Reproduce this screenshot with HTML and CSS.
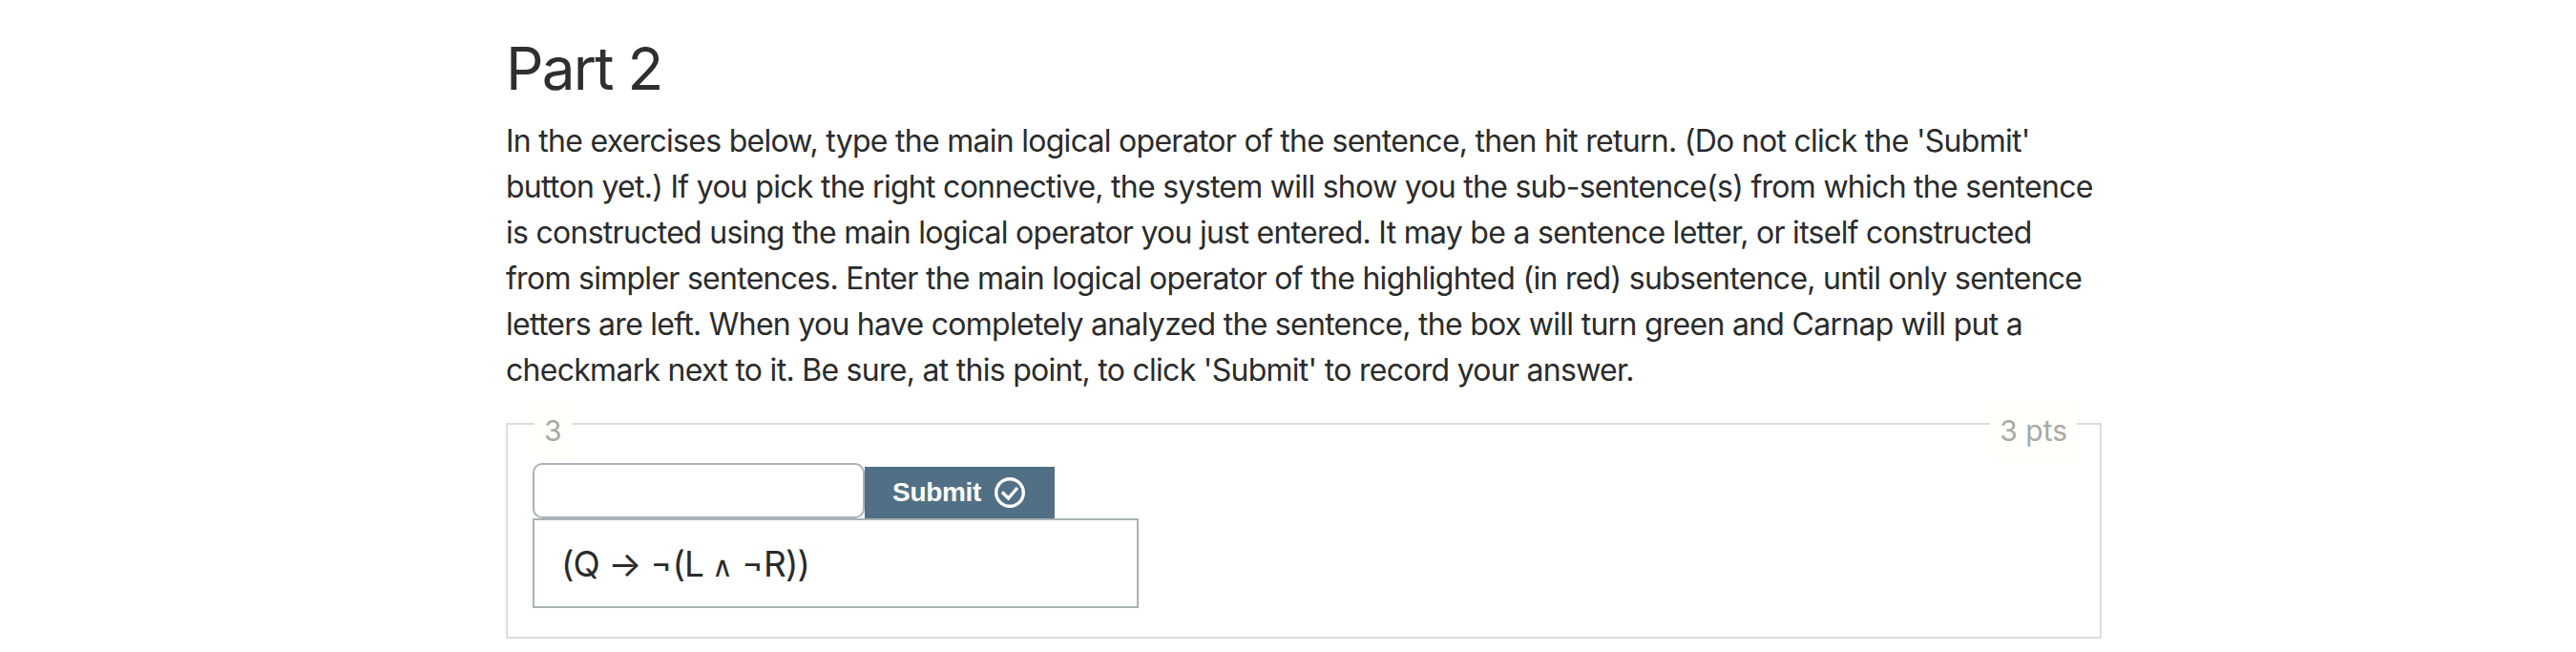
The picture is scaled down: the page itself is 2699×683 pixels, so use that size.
FILE: index.html
```html
<!DOCTYPE html>
<html lang="en">
<head>
    <meta charset="UTF-8">
    <title>Part 2</title>
    <link rel="stylesheet" href="styles.css">
</head>
<body>
    <main class="content">
        <h2 class="part-title">Part 2</h2>
        <p class="intro">In the exercises below, type the main logical operator of the sentence, then hit return. (Do not click the 'Submit' button yet.) If you pick the right connective, the system will show you the sub-sentence(s) from which the sentence is constructed using the main logical operator you just entered. It may be a sentence letter, or itself constructed from simpler sentences. Enter the main logical operator of the highlighted (in red) subsentence, until only sentence letters are left. When you have completely analyzed the sentence, the box will turn green and Carnap will put a checkmark next to it. Be sure, at this point, to click 'Submit' to record your answer.</p>
        <div class="exercise">
            <span class="exercise-label exercise-number">3</span>
            <span class="exercise-label exercise-points">3 pts</span>
            <div class="answer-row">
                <input type="text" class="answer-input">
                <button class="submit-button">Submit
                    <svg class="submit-icon" viewBox="0 0 32 32" aria-hidden="true">
                        <circle cx="16" cy="16" r="14.3" fill="none" stroke="#fff" stroke-width="3.4"/>
                        <path d="M8 15.5l6.5 6.5L24 11" fill="none" stroke="#fff" stroke-width="3.4"/>
                    </svg>
                </button>
            </div>
            <div class="sentence">(Q → ¬(L <span class="sentence-and">∧</span> ¬R))</div>
        </div>
    </main>
</body>
</html>
```
FILE: styles.css
```css
body {
    margin: 0;
    background-color: #fff;
    font-family: 'Inter', 'Liberation Sans', sans-serif;
    color: #2b2b2b;
}
.content {
    width: 1672px;
    margin-left: 530px;
}
.part-title {
    margin: 0;
    padding-top: 32px;
    font-size: 62px;
    font-weight: 400;
    letter-spacing: -1.8px;
    line-height: 80px;
    color: #2f2f2f;
}
.intro {
    width: 1666px;
    margin: 12px 0 0;
    font-size: 32px;
    letter-spacing: -0.72px;
    line-height: 48px;
}
.exercise {
    position: relative;
    box-sizing: border-box;
    height: 226px;
    margin-top: 31px;
    padding: 40px 26px 0;
    border: 2px solid #ddd;
}
.exercise-label {
    position: absolute;
    top: -26px;
    padding: 0 10px;
    height: 64px;
    line-height: 64px;
    font-size: 30px;
    color: #a9a9a4;
    background-color: #fffffb;
}
.exercise-number {
    left: 28px;
}
.exercise-points {
    right: 24px;
}
.answer-row {
    display: flex;
    align-items: flex-end;
}
.answer-input {
    box-sizing: border-box;
    width: 348px;
    height: 58px;
    padding: 0 10px;
    border: 2px solid #aab2b7;
    border-radius: 10px;
    background: #fff;
}
.submit-button {
    display: flex;
    align-items: center;
    gap: 14px;
    box-sizing: border-box;
    width: 199px;
    height: 54px;
    padding: 0 0 0 29px;
    border: none;
    background-color: #527085;
    color: #fff;
    font-family: 'Liberation Sans', sans-serif;
    font-size: 28px;
    font-weight: 700;
    letter-spacing: -0.3px;
}
.submit-icon {
    width: 32px;
    height: 32px;
}
.sentence {
    box-sizing: border-box;
    width: 635px;
    height: 94px;
    padding-left: 28px;
    border: 2px solid #aab2b7;
    font-size: 37px;
    letter-spacing: -1px;
    line-height: 92px;
}
.sentence-and {
    font-size: 30px;
}
```
